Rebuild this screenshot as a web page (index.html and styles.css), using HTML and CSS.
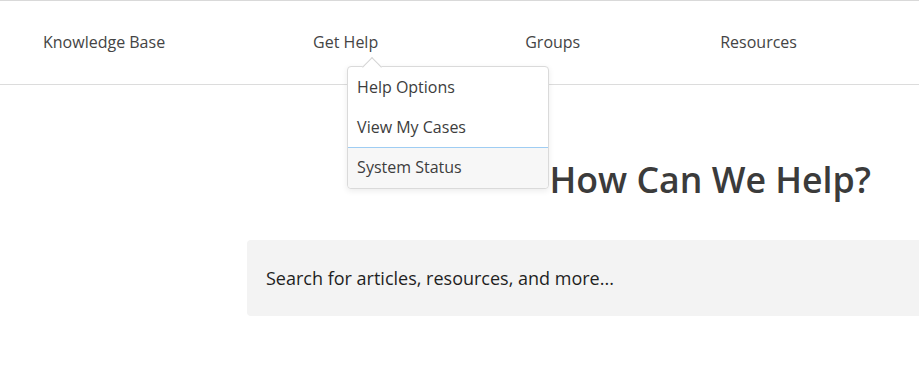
FILE: index.html
```html
<!DOCTYPE html>
<html lang="en">
<head>
    <meta charset="UTF-8">
    <meta name="viewport" content="width=device-width, initial-scale=1.0">
    <title>Support Center</title>
    <link rel="stylesheet" href="styles.css">
</head>
<body>
    <nav class="topnav">
        <a href="#" class="nav-item nav-kb">Knowledge Base</a>
        <div class="nav-item nav-help">
            <a href="#">Get Help</a>
            <!-- dropdown aberto -->
            <ul class="dropdown">
                <li><a href="#">Help Options</a></li>
                <li><a href="#">View My Cases</a></li>
                <li class="active"><a href="#">System Status</a></li>
            </ul>
        </div>
        <a href="#" class="nav-item nav-groups">Groups</a>
        <a href="#" class="nav-item nav-res">Resources</a>
    </nav>

    <section class="hero">
        <h2>How Can We Help?</h2>
        <div class="search-box">
            <input type="text" placeholder="Search for articles, resources, and more...">
        </div>
    </section>
</body>
</html>
```

FILE: styles.css
```css
* {
    margin: 0;
    padding: 0;
    box-sizing: border-box;
}

body {
    font-family: 'Open Sans', 'Noto Sans', sans-serif;
    background: #fff;
}

.topnav {
    display: flex;
    align-items: center;
    height: 85px;
    border-top: 1px solid #d9d9d9;
    border-bottom: 1px solid #dcdcdc;
    padding-left: 43px;
    padding-bottom: 2px;
}

.nav-item,
.nav-item > a {
    color: #444;
    font-size: 16px;
    text-decoration: none;
}

.nav-kb {
    margin-right: 148px;
}

.nav-help {
    position: relative;
    margin-right: 147px;
}

.nav-groups {
    margin-right: 140px;
}

.dropdown {
    position: absolute;
    top: 35px;
    left: 34px;
    width: 202px;
    list-style: none;
    background: #fff;
    border: 1px solid #dadada;
    border-radius: 4px;
    box-shadow: 0 2px 6px rgba(0, 0, 0, 0.08);
    z-index: 10;
}

.dropdown::before {
    content: '';
    position: absolute;
    top: -7px;
    left: 17px;
    width: 13px;
    height: 13px;
    background: #fff;
    border-left: 1px solid #d4d4d4;
    border-top: 1px solid #d4d4d4;
    transform: rotate(45deg);
}

.dropdown li a {
    display: block;
    height: 40px;
    line-height: 40px;
    padding-left: 9px;
    color: #3d3d3d;
    font-size: 16px;
    text-decoration: none;
}

.dropdown li.active {
    border-top: 1px solid #9fcdf3;
    background: #f7f7f7;
    border-radius: 0 0 4px 4px;
}

.dropdown li.active a {
    height: 40px;
    line-height: 38px;
}

.hero {
    margin-left: 247px;
}

.hero h2 {
    text-align: right;
    padding-right: 48px;
    color: #3b3b3b;
    font-size: 35.7px;
    font-weight: 600;
    margin-top: 70px;
    height: 70px;
    line-height: 48px;
}

.search-box {
    margin-top: 15px;
    background: #f3f3f3;
    border-radius: 4px 0 0 4px;
    height: 76px;
    display: flex;
    align-items: center;
    padding-left: 19px;
}

.search-box input {
    width: 100%;
    border: none;
    background: transparent;
    font-family: inherit;
    font-size: 18px;
    color: #222;
    outline: none;
}

.search-box input::placeholder {
    color: #1f1f1f;
}
```
